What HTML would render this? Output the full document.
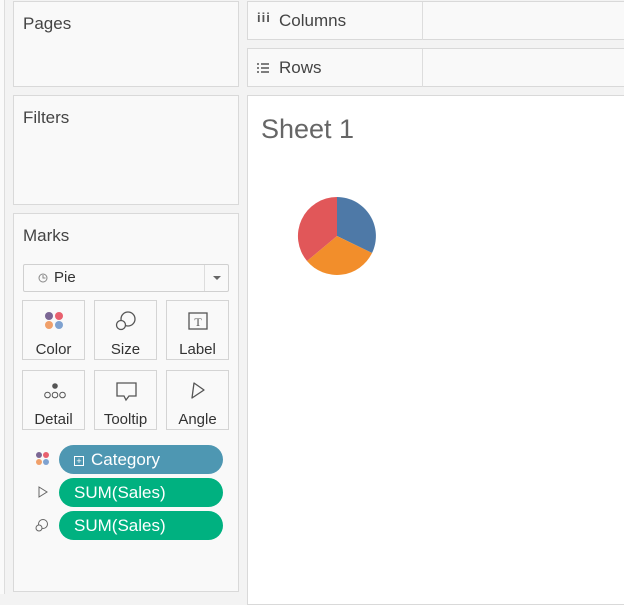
<!DOCTYPE html>
<html><head><style>
body{margin:0;width:624px;height:594px;background:#f3f3f3;position:relative;overflow:hidden;font-family:"Liberation Sans",sans-serif;color:#333}
.p{position:absolute;background:#f9f9f9;border:1px solid #d9d9d9;box-sizing:border-box}
.t{position:absolute;left:9px;font-size:17px;color:#444}
.card{position:absolute;width:63px;height:60px;background:#f9f9f9;border:1px solid #d4d4d4;box-sizing:border-box;text-align:center;font-size:15px;color:#333}
.card span{position:absolute;left:0;right:0;top:40px}
.card svg{position:absolute;left:20px;top:9px}
.pill{position:absolute;left:59px;width:164px;height:29px;border-radius:15px;color:#fff;font-size:17px;line-height:29px;box-sizing:border-box;padding-left:15px}
</style></head><body>
<div style="position:absolute;left:0;top:0;width:4px;height:594px;background:#fafafa;border-right:1px solid #ddd"></div>
<div class="p" style="left:13px;top:1px;width:226px;height:86px"><div class="t" style="top:12px">Pages</div></div>
<div class="p" style="left:13px;top:95px;width:226px;height:110px"><div class="t" style="top:12px">Filters</div></div>
<div class="p" style="left:13px;top:213px;width:226px;height:379px"><div class="t" style="top:12px">Marks</div>
 <div style="position:absolute;left:9px;top:50px;width:206px;height:28px;background:#f9f9f9;border:1px solid #d0d0d0;border-radius:2px;box-sizing:border-box">
  <svg width="10" height="10" style="position:absolute;left:14px;top:8px"><circle cx="5" cy="5" r="4" fill="none" stroke="#888" stroke-width="1"/><path d="M5 2V5H7.5" stroke="#888" fill="none"/></svg>
  <span style="position:absolute;left:30px;top:4px;font-size:15px">Pie</span>
  <div style="position:absolute;left:180px;top:0;width:1px;height:26px;background:#ddd"></div>
  <div style="position:absolute;left:189px;top:11px;border:4px solid transparent;border-top:4px solid #666"></div>
 </div>
</div>
<div class="card" style="left:22px;top:300px"><svg width="22" height="22"><circle cx="6" cy="6" r="4" fill="#7b6794"/><circle cx="16" cy="6" r="4" fill="#e8606e"/><circle cx="6" cy="15" r="4" fill="#f0a06a"/><circle cx="16" cy="15" r="4" fill="#7fa2d0"/></svg><span>Color</span></div>
<div class="card" style="left:94px;top:300px"><svg width="22" height="22"><circle cx="13" cy="9" r="7" fill="none" stroke="#555" stroke-width="1.3"/><circle cx="6" cy="15" r="4.5" fill="#f9f9f9" stroke="#555" stroke-width="1.3"/></svg><span>Size</span></div>
<div class="card" style="left:166px;top:300px"><svg width="22" height="22"><rect x="2" y="3" width="18" height="16" fill="none" stroke="#555" stroke-width="1.3"/><text x="11" y="16" text-anchor="middle" font-family="Liberation Serif" font-size="12" fill="#555">T</text></svg><span>Label</span></div>
<div class="card" style="left:22px;top:370px"><svg width="24" height="22"><circle cx="12" cy="6" r="2.8" fill="#555"/><circle cx="4.5" cy="15" r="2.8" fill="none" stroke="#555"/><circle cx="12" cy="15" r="2.8" fill="none" stroke="#555"/><circle cx="19.5" cy="15" r="2.8" fill="none" stroke="#555"/></svg><span>Detail</span></div>
<div class="card" style="left:94px;top:370px"><svg width="24" height="22"><path d="M2 3H21V16H14L11 20L9 16H2Z" fill="none" stroke="#555" stroke-width="1.3"/></svg><span>Tooltip</span></div>
<div class="card" style="left:166px;top:370px"><svg width="22" height="22"><path d="M7 3L17 10L5 18Z" fill="none" stroke="#555" stroke-width="1.3" stroke-linejoin="round"/></svg><span>Angle</span></div>
<svg width="16" height="16" style="position:absolute;left:35px;top:451px"><circle cx="4" cy="4" r="3" fill="#7b6794"/><circle cx="11" cy="4" r="3" fill="#e8606e"/><circle cx="4" cy="11" r="3" fill="#f0a06a"/><circle cx="11" cy="11" r="3" fill="#7fa2d0"/></svg>
<div class="pill" style="top:445px;background:#4e97b2"><span style="border:1px solid #fff;display:inline-block;width:8px;height:8px;line-height:8px;text-align:center;margin-right:7px;vertical-align:1px;font-size:9px">+</span>Category</div>
<svg width="12" height="12" style="position:absolute;left:37px;top:486px"><path d="M2 1L10 6L2 11Z" fill="none" stroke="#666"/></svg>
<div class="pill" style="top:478px;background:#00b180">SUM(Sales)</div>
<svg width="14" height="14" style="position:absolute;left:35px;top:518px"><circle cx="8" cy="6" r="4.5" fill="none" stroke="#666"/><circle cx="4" cy="10" r="3" fill="#f9f9f9" stroke="#666"/></svg>
<div class="pill" style="top:511px;background:#00b180">SUM(Sales)</div>

<div class="p" style="left:247px;top:1px;width:390px;height:39px;background:#f9f9f9"><div style="position:absolute;left:174px;top:0;width:1px;height:38px;background:#ddd"></div>
<span style="position:absolute;left:9px;top:8px;font-size:13px;font-weight:bold;color:#555;letter-spacing:1px">iii</span><span style="position:absolute;left:31px;top:9px;font-size:17px;color:#444">Columns</span></div>
<div class="p" style="left:247px;top:48px;width:390px;height:39px;background:#f9f9f9"><div style="position:absolute;left:174px;top:0;width:1px;height:38px;background:#ddd"></div>
<svg width="14" height="12" style="position:absolute;left:8px;top:13px"><g stroke="#555" stroke-width="1.4"><path d="M1 2H3M5 2H13M1 6H3M5 6H13M1 10H3M5 10H13"/></g></svg><span style="position:absolute;left:31px;top:9px;font-size:17px;color:#444">Rows</span></div>
<div class="p" style="left:247px;top:95px;width:390px;height:510px;background:#fff">
 <div style="position:absolute;left:13px;top:18px;font-size:27px;color:#666">Sheet 1</div>
</div>
<svg width="90" height="90" style="position:absolute;left:292px;top:191px">
<g transform="translate(45,45)">
<path d="M0 0V-39A39 39 0 0 1 35 17Z" fill="#4e79a7"/>
<path d="M0 0L35 17A39 39 0 0 1 -30 25Z" fill="#f28e2b"/>
<path d="M0 0L-30 25A39 39 0 0 1 0 -39Z" fill="#e15759"/>
</g></svg>
</body></html>
